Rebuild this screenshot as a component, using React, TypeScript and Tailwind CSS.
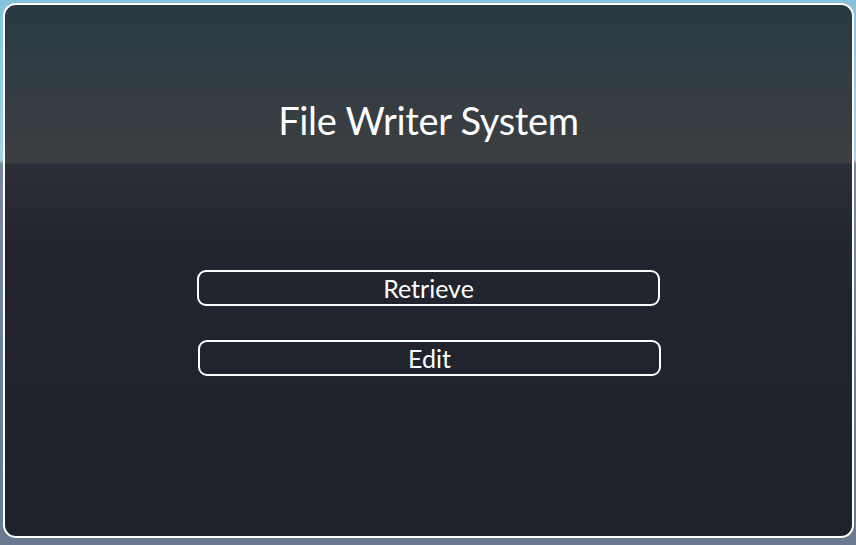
import React from "react";

const font = { fontFamily: "Lato, 'Open Sans', sans-serif" };

// Menu button with a white outline
const MenuButton: React.FC<{ label: string; className?: string }> = ({ label, className }) => (
  <button
    className={
      "w-[463px] h-[36px] rounded-[9px] border-2 border-white text-white text-[25px] leading-none flex items-center justify-center " +
      (className ?? "")
    }
    style={font}
  >
    {label}
  </button>
);

export default function App() {
  return (
    <div className="w-[856px] h-[545px] overflow-hidden bg-[linear-gradient(to_bottom,#86c2dd_0px,#a9d2e3_160px,#7a879b_164px,#6a7890_545px)]">
      <div className="ml-[3px] mt-[3px] w-[851px] h-[535px] rounded-[13px] border-2 border-white overflow-hidden flex flex-col items-center bg-[linear-gradient(to_bottom,#283a43_0px,#343d44_90px,#3c3f41_158px,#2c2f37_159px,#22252d_240px,#1f222a_100%)]">
        <h1
          className="mt-[92px] h-[46px] leading-[46px] text-white text-[38px] font-normal tracking-[-0.3px]"
          style={font}
        >
          File Writer System
        </h1>
        <MenuButton label="Retrieve" className="mt-[127px]" />
        <MenuButton label="Edit" className="mt-[34px] ml-[2px]" />
      </div>
    </div>
  );
}
